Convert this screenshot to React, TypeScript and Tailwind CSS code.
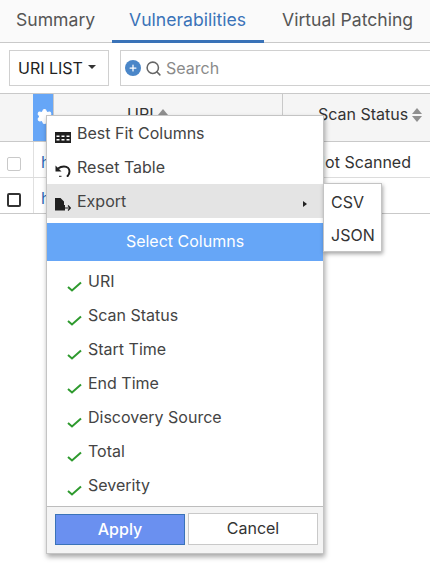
import { Search, Plus, Settings } from "lucide-react";

const columns = ["URI", "Scan Status", "Start Time", "End Time", "Discovery Source", "Total", "Severity"];

function SortCaret() {
  return (
    <svg viewBox="0 0 10 14" className="w-[10px] h-[14px] shrink-0" fill="#8f8f8f">
      <path d="M5 0 L10 6 L0 6 Z" />
      <path d="M5 14 L10 8 L0 8 Z" />
    </svg>
  );
}

function GridIcon() {
  return (
    <svg viewBox="0 0 16 11" className="w-[16px] h-[11px] shrink-0 mt-[8px]" fill="#1f1f1f">
      <path d="M0 0h16v11H0z" />
      <path fill="#fff" d="M1.5 3.5h3v1.5h-3zM6.5 3.5h3v1.5h-3zM11.5 3.5h3v1.5h-3zM1.5 7h3v1.5h-3zM6.5 7h3v1.5h-3zM11.5 7h3v1.5h-3z" />
    </svg>
  );
}

function UndoIcon() {
  return (
    <svg viewBox="0 0 16 12" className="w-[16px] h-[12px] shrink-0 mt-[8px]" fill="none">
      <path d="M3 3.5 C5 2 7 1.5 9 1.5 C12.5 1.5 14.5 4 14.5 6.5 C14.5 9 13.5 10.5 12 11.8" stroke="#1f1f1f" strokeWidth="2" />
      <path d="M0.5 0.5 L0.5 6.5 L6.5 6.5 Z" fill="#1f1f1f" />
      <path d="M4 11.3h2.5" stroke="#1f1f1f" strokeWidth="1" />
    </svg>
  );
}

function ExportIcon() {
  return (
    <svg viewBox="0 0 16 13" className="w-[16px] h-[13px] shrink-0 mt-[6px]" fill="#1f1f1f">
      <path d="M0 0h5.5l3.5 3.5v3.5h1v5.5H0z" />
      <path d="M9.5 10h6M13 7.5l2.5 2.5-2.5 2.5" stroke="#1f1f1f" strokeWidth="1.2" fill="none" />
    </svg>
  );
}

function Check() {
  return (
    <svg viewBox="0 0 15 11" className="w-[15px] h-[11px] shrink-0 mt-[12px]" fill="none" stroke="#2e9a2e" strokeWidth="2">
      <path d="M1 6 L5 9.5 L14 1.5" />
    </svg>
  );
}

export default function App() {
  return (
    <div className="relative w-[430px] h-[565px] overflow-hidden bg-white text-[#333] font-['Inter',sans-serif]">
      {/* tabs */}
      <div className="flex h-[43px] bg-[#fafafa] border-b border-[#c9c9c9] text-[17.6px] text-[#555]">
        <div className="w-[112px] pl-4 pt-[7px]">Summary</div>
        <div className="w-[152px] h-[43px] pl-[17px] pt-[7px] text-[#3a73b8] border-b-[3px] border-[#3a73b8]">Vulnerabilities</div>
        <div className="pl-[18px] pt-[7px]">Virtual Patching</div>
      </div>

      {/* toolbar */}
      <div className="flex h-[50px] gap-[11px] pl-[9px] pt-[7px] bg-white">
        <div className="flex items-center w-[100px] h-[36px] border border-[#d0d0d0] pl-[8px] text-[16px] text-[#222]">
          URI LIST
          <span className="ml-[5px] mb-[3px] border-x-[4px] border-x-transparent border-t-[4px] border-t-[#333]" />
        </div>
        <div className="flex items-center flex-1 h-[36px] border border-r-0 border-[#d0d0d0] pl-[4px] text-[16px] text-[#8a8a8a]">
          <span className="flex items-center justify-center w-[16px] h-[16px] rounded-full bg-[#4a86c8]">
            <Plus className="w-[10px] h-[10px] text-white" strokeWidth={3} />
          </span>
          <Search className="w-[17px] h-[17px] ml-[4px] text-[#666]" strokeWidth={2.2} />
          <span className="ml-[4px]">Search</span>
        </div>
      </div>

      {/* table */}
      <div className="text-[16px] text-[#333]">
        <div className="flex h-[49px] bg-[#f5f5f5] border-y border-[#c9c9c9]">
          <div className="w-[33px]" />
          <div className="flex justify-center w-[20px] pl-[3px] pt-[14px] bg-[#66a6f7]">
            <Settings className="w-[17px] h-[17px] shrink-0 text-white" fill="white" stroke="#ffffff" strokeWidth={1.5} />
          </div>
          <div className="flex items-start gap-[4px] w-[229px] pl-[73px] pt-[8px] border-l border-[#c9c9c9]">
            URI
            <svg viewBox="0 0 10 6" className="w-[10px] h-[6px] mt-[7px]" fill="#8f8f8f">
              <path d="M5 0 L10 6 L0 6 Z" />
            </svg>
          </div>
          <div className="flex gap-[4px] flex-1 pl-[35px] pt-[8px] border-l border-[#c9c9c9]">
            Scan Status
            <div className="mt-[6px]">
              <SortCaret />
            </div>
          </div>
        </div>
        <div className="flex h-[36px] border-b border-[#dcdcdc]">
          <div className="flex justify-center w-[34px] pt-[15px] border-r border-[#e0e0e0] pr-[6px]">
            <div className="w-[14px] h-[14px] border border-[#c9c9c9] rounded-[2px]" />
          </div>
          <div className="w-[249px] pl-[7px] pt-[8px] text-[#2a6ab8]">h</div>
          <div className="pl-[30px] pt-[8px]">Not Scanned</div>
        </div>
        <div className="flex h-[36px] border-b border-[#c9c9c9]">
          <div className="flex justify-center w-[34px] pt-[15px] border-r border-[#e0e0e0] pr-[6px]">
            <div className="w-[14px] h-[14px] border-2 border-[#333] rounded-[2px]" />
          </div>
          <div className="pl-[7px] pt-[8px] text-[#2a6ab8]">h</div>
        </div>
      </div>

      {/* column menu */}
      <div className="absolute left-[46px] top-[115px] w-[278px] h-[439px] flex flex-col bg-white border border-[#c4c4c4] shadow-[1px_3px_5px_rgba(0,0,0,0.35)] text-[16px] text-[#444]">
        <div className="flex items-center gap-[6px] h-[34px] pl-[8px]">
          <GridIcon />
          Best Fit Columns
        </div>
        <div className="flex items-center gap-[6px] h-[34px] pl-[8px]">
          <UndoIcon />
          Reset Table
        </div>
        <div className="relative flex items-center gap-[6px] h-[34px] pl-[8px] bg-[#e4e4e4]">
          <ExportIcon />
          Export
          <span className="absolute right-[16px] top-[17px] border-y-[3px] border-y-transparent border-l-[4px] border-l-[#222]" />
        </div>
        <div className="flex items-center justify-center h-[38px] mt-[5px] pb-[2px] bg-[#66a6f7] text-white">Select Columns</div>
        <div className="flex flex-col flex-1 pt-[6px] pl-[20px]">
          {columns.map((c) => (
            <div key={c} className="flex items-start gap-[6px] h-[34px] pt-[2px]">
              <Check />
              <span>{c}</span>
            </div>
          ))}
        </div>
        <div className="flex gap-[3px] h-[47px] pl-[8px] pt-[7px] bg-[#f4f4f4] border-t border-[#bdbdbd]">
          <div className="flex items-center justify-center shrink-0 w-[130px] h-[31px] pb-[2px] bg-[#6a90f0] border border-[#3a73b8] text-white font-medium">Apply</div>
          <div className="flex items-center justify-center shrink-0 w-[130px] h-[32px] pb-[2px] -mt-px bg-white border border-[#c9c9c9] text-[#333]">Cancel</div>
        </div>
      </div>

      {/* export submenu */}
      <div className="absolute left-[323px] top-[183px] w-[59px] h-[69px] flex flex-col pt-[1px] bg-white border border-[#c4c4c4] shadow-[1px_2px_4px_rgba(0,0,0,0.35)] text-[16px] text-[#333]">
        <div className="flex items-center h-[34px] pl-[7px]">CSV</div>
        <div className="flex items-center h-[34px] pl-[7px]">JSON</div>
      </div>
    </div>
  );
}
